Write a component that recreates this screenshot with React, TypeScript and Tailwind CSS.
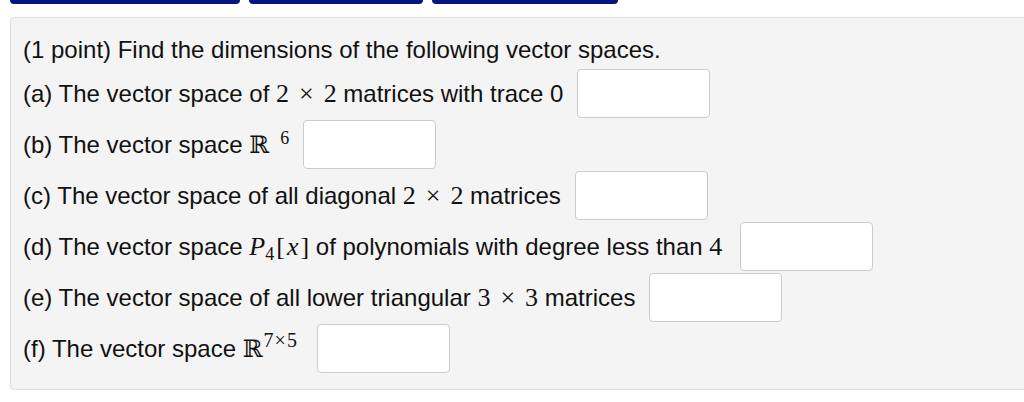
import React from "react";

const sans = { fontFamily: '"Liberation Sans", Arial, sans-serif' };
const serif = { fontFamily: '"Liberation Serif", "DejaVu Serif", serif' };

function M({ children, italic }: { children: React.ReactNode; italic?: boolean }) {
  return (
    <span className={`text-[26px] ${italic ? "italic" : ""}`} style={serif}>
      {children}
    </span>
  );
}

function Times({ n }: { n: string }) {
  return (
    <M>
      {n}
      <span className="mx-[10px]">×</span>
      {n}
    </M>
  );
}

function Bb() {
  return (
    <span className="text-[24px]" style={{ fontFamily: '"DejaVu Serif", serif' }}>
      ℝ
    </span>
  );
}

function Box() {
  return <div className="ml-[14px] h-[49px] w-[133px] shrink-0 rounded-[4px] border border-[#cccccc] bg-white" />;
}

function Row({ children }: { children: React.ReactNode }) {
  return (
    <div className="flex h-[51px] items-center">
      <div className="whitespace-nowrap">{children}</div>
      <Box />
    </div>
  );
}

export default function App() {
  return (
    <div className="h-[402px] w-[1024px] overflow-hidden bg-white text-[24px] text-[#111]" style={sans}>
      <div className="flex gap-[9px] pl-[10px]">
        <div className="h-[4px] w-[230px] rounded-b-[5px] bg-[#08157e]" />
        <div className="h-[4px] w-[174px] rounded-b-[5px] bg-[#08157e]" />
        <div className="h-[4px] w-[186px] rounded-b-[5px] bg-[#08157e]" />
      </div>
      <div className="ml-[10px] mt-[13px] w-[1030px] rounded-[4px] border border-[#dedede] bg-[#f4f4f4] pb-[15px] pl-[12px]">
        <div className="pt-[18px] leading-[28px]">(1 point) Find the dimensions of the following vector spaces.</div>
        <div className="mt-[4px]">
          <Row>
            (a) The vector space of <Times n="2" /> matrices with trace 0
          </Row>
          <Row>
            (b) The vector space <Bb />
            <sup className="ml-[11px] text-[18px]" style={serif}>
              6
            </sup>
          </Row>
          <Row>
            (c) The vector space of all diagonal <Times n="2" /> matrices
          </Row>
          <Row>
            (d) The vector space <M italic>P</M>
            <sub className="text-[18px]" style={serif}>
              4
            </sub>
            <M>
              <span className="ml-[2px]">[</span>
              <span className="mx-[2px] italic">x</span>]
            </M>{" "}
            of polynomials with degree less than <M>4</M>
            <span className="ml-[4px]" />
          </Row>
          <Row>
            (e) The vector space of all lower triangular <Times n="3" /> matrices
          </Row>
          <Row>
            (f) The vector space <Bb />
            <sup className="ml-[1px] text-[20px]" style={serif}>
              7<span className="mx-[1px]">×</span>5
            </sup>
            <span className="ml-[6px]" />
          </Row>
        </div>
      </div>
    </div>
  );
}
